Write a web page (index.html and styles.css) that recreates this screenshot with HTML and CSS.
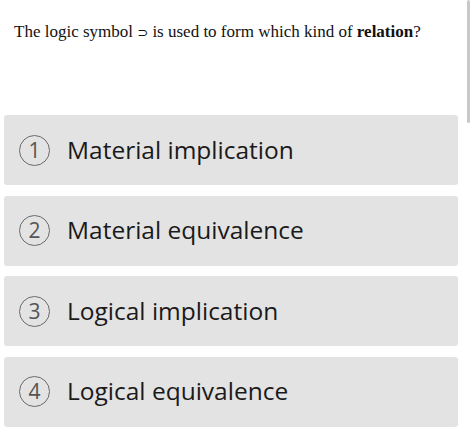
FILE: index.html
```html
<!DOCTYPE html>
<html>
<head>
<meta charset="utf-8">
<link rel="stylesheet" href="styles.css">
</head>
<body>
<div class="page">
  <p class="question">The logic symbol <span class="sym">&#x2283;</span> is used to form which kind of <b>relation</b>?</p>
  <div class="options">
    <div class="option"><span class="num">1</span><span class="label">Material implication</span></div>
    <div class="option"><span class="num">2</span><span class="label">Material equivalence</span></div>
    <div class="option"><span class="num">3</span><span class="label">Logical implication</span></div>
    <div class="option"><span class="num">4</span><span class="label">Logical equivalence</span></div>
  </div>
  <div class="scrollbar"></div>
</div>
</body>
</html>
```
FILE: styles.css
```css
html, body {
  margin: 0;
  padding: 0;
  background: #ffffff;
}
.page {
  position: relative;
  width: 474px;
  height: 429px;
  overflow: hidden;
}
.question {
  margin: 0;
  padding: 22px 0 0 14px;
  height: 115px;
  box-sizing: border-box;
  font-family: "Liberation Serif", "Times New Roman", serif;
  font-size: 17px;
  line-height: 20px;
  color: #111;
}
.sym {
  font-family: "DejaVu Sans", sans-serif;
  font-size: 13px;
}
.options {
  display: flex;
  flex-direction: column;
  gap: 10.6px;
  padding: 0 16px 0 4px;
}
.option {
  height: 70px;
  background: #e3e3e3;
  border-radius: 3px;
  display: flex;
  align-items: center;
  padding-left: 15px;
}
.num {
  box-sizing: border-box;
  width: 31px;
  height: 31px;
  border: 1.6px solid #6a6a6a;
  border-radius: 50%;
  display: flex;
  align-items: center;
  justify-content: center;
  font-family: "Open Sans", sans-serif;
  font-size: 21px;
  line-height: 1;
  color: #555;
  flex: none;
}
.label {
  margin-left: 17px;
  font-family: "Open Sans", sans-serif;
  font-size: 24.5px;
  color: #1a1a1a;
  position: relative;
  top: -1px;
}
.scrollbar {
  position: absolute;
  left: 467px;
  top: 0;
  width: 3px;
  height: 123px;
  background: #c8c8c8;
  border-radius: 2px;
}
```
